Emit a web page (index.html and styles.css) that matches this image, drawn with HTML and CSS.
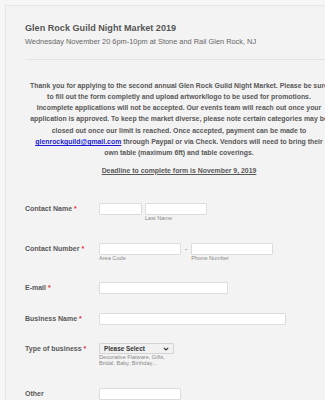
FILE: index.html
```html
<!DOCTYPE html>
<html lang="en">
<head>
    <meta charset="UTF-8">
    <meta name="viewport" content="width=device-width, initial-scale=1.0">
    <title>Glen Rock Guild Night Market 2019</title>
    <link rel="stylesheet" href="styles.css">
</head>
<body>
    <div class="form">
        <div class="header">
            <h1>Glen Rock Guild Night Market 2019</h1>
            <p class="subtitle">Wednesday November 20 6pm-10pm at Stone and Rail Glen Rock, NJ</p>
        </div>

        <div class="intro">
            <p>Thank you for applying to the second annual Glen Rock Guild Night Market. Please be sure<br>
            to fill out the form completly and upload artwork/logo to be used for promotions.<br>
            Incomplete applications will not be accepted. Our events team will reach out once your<br>
            application is approved. To keep the market diverse, please note certain categories may be<br>
            closed out once our limit is reached. Once accepted, payment can be made to<br>
            <a href="#">glenrockguild@gmail.com</a> through Paypal or via Check. Vendors will need to bring their<br>
            own table (maximum 6ft) and table coverings.</p>
            <p class="deadline">Deadline to complete form is November 9, 2019</p>
        </div>

        <ul class="fields">
            <li class="row">
                <label class="label">Contact Name <span class="req">*</span></label>
                <div class="inputs">
                    <span class="part"><input class="input w-first" type="text"></span>
                    <span class="part"><input class="input w-last" type="text"><span class="hint">Last Name</span></span>
                </div>
            </li>
            <li class="row">
                <label class="label">Contact Number <span class="req">*</span></label>
                <div class="inputs">
                    <span class="part"><input class="input w-phone" type="text"><span class="hint">Area Code</span></span>
                    <span class="dash">-</span>
                    <span class="part"><input class="input w-phone" type="text"><span class="hint">Phone Number</span></span>
                </div>
            </li>
            <li class="row">
                <label class="label">E-mail <span class="req">*</span></label>
                <div class="inputs">
                    <input class="input w-email" type="text">
                </div>
            </li>
            <li class="row">
                <label class="label">Business Name <span class="req">*</span></label>
                <div class="inputs">
                    <input class="input w-business" type="text">
                </div>
            </li>
            <li class="row">
                <label class="label">Type of business <span class="req">*</span></label>
                <div class="inputs">
                    <span class="part">
                        <span class="select">
                            <span class="select-text">Please Select</span>
                            <svg class="chevron" width="6" height="4" viewBox="0 0 6 4"><path d="M0.8 0.8 L3 3 L5.2 0.8" fill="none" stroke="#333" stroke-width="1.2"/></svg>
                        </span>
                        <span class="hint">Decorative Flatware, Gifts,<br>Bridal, Baby, Birthday...</span>
                    </span>
                </div>
            </li>
            <li class="row">
                <label class="label">Other</label>
                <div class="inputs">
                    <input class="input w-phone" type="text">
                </div>
            </li>
        </ul>
    </div>
</body>
</html>
```

FILE: styles.css
```css
html, body {
    overflow: hidden;
}

body {
    font-family: "Liberation Sans", Arial, sans-serif;
    background-color: #f6f6f6;
    margin: 0;
    padding: 0;
}

.form {
    margin: 5px 0 0 5px;
    width: 380px;
    min-height: 420px;
    padding-left: 19px;
    background-color: #f3f3f3;
    border-top: 1px solid #e6e6e6;
    border-left: 1px solid #e6e6e6;
}

.header {
    padding-top: 17px;
    padding-bottom: 12px;
    border-bottom: 1px solid #e2e2e2;
}

.header h1 {
    margin: 0;
    font-size: 9.1px;
    line-height: 11px;
    color: #555;
}

.subtitle {
    margin: 2.5px 0 0;
    font-size: 7.4px;
    line-height: 10px;
    color: #666;
}

.intro {
    width: 308px;
    padding-top: 20px;
    text-align: center;
    font-weight: bold;
    font-size: 6.9px;
    line-height: 11.3px;
    color: #585858;
}

.intro p {
    margin: 0 -8px;
    white-space: nowrap;
}

.intro a {
    color: #1a1ad6;
}

.intro .deadline {
    margin-top: 6px;
    text-decoration: underline;
}

.fields {
    list-style: none;
    margin: 18px 0 0;
    padding: 0;
}

.row {
    display: flex;
    padding: 9.2px 0;
}

.label {
    width: 74px;
    flex-shrink: 0;
    font-size: 7px;
    font-weight: bold;
    line-height: 11px;
    color: #585858;
}

.req {
    color: #e2343b;
}

.inputs {
    display: flex;
    align-items: flex-start;
    gap: 3px;
}

.part {
    display: flex;
    flex-direction: column;
}

.input {
    height: 12px;
    margin: 0;
    padding: 0;
    box-sizing: border-box;
    background: #fff;
    border: 1px solid #dcdcdc;
    border-radius: 1px;
}

.w-first { width: 43px; }
.w-last { width: 62px; }
.w-phone { width: 82px; }
.w-email { width: 129px; }
.w-business { width: 187px; }

.dash {
    font-size: 7px;
    line-height: 12px;
    color: #777;
    padding: 0 1px;
}

.hint {
    margin-top: 1px;
    padding-bottom: 2.5px;
    font-size: 5.6px;
    line-height: 5.8px;
    color: #8a8a8a;
}

.select {
    position: relative;
    display: flex;
    align-items: center;
    width: 75px;
    height: 11px;
    padding-left: 4px;
    box-sizing: border-box;
    background: #f1f1f1;
    border: 1px solid #d4d4d4;
    border-radius: 1px;
}

.select-text {
    font-size: 6.4px;
    font-weight: bold;
    color: #333;
}

.chevron {
    position: absolute;
    right: 4px;
    top: 3px;
}
```
